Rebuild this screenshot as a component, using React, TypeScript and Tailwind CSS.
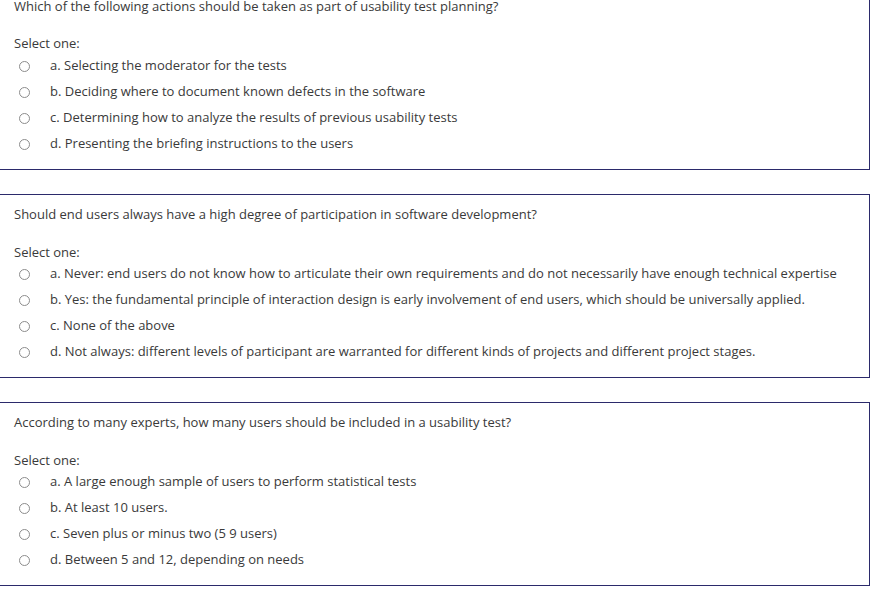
import React from 'react';

type Question = {
    text: string;
    options: string[];
};

const questions: Question[] = [
    {
        text: 'Which of the following actions should be taken as part of usability test planning?',
        options: [
            'a. Selecting the moderator for the tests',
            'b. Deciding where to document known defects in the software',
            'c. Determining how to analyze the results of previous usability tests',
            'd. Presenting the briefing instructions to the users',
        ],
    },
    {
        text: 'Should end users always have a high degree of participation in software development?',
        options: [
            'a. Never: end users do not know how to articulate their own requirements and do not necessarily have enough technical expertise',
            'b. Yes: the fundamental principle of interaction design is early involvement of end users, which should be universally applied.',
            'c. None of the above',
            'd. Not always: different levels of participant are warranted for different kinds of projects and different project stages.',
        ],
    },
    {
        text: 'According to many experts, how many users should be included in a usability test?',
        options: [
            'a. A large enough sample of users to perform statistical tests',
            'b. At least 10 users.',
            'c. Seven plus or minus two (5 9 users)',
            'd. Between 5 and 12, depending on needs',
        ],
    },
];

function QuestionCard({q, first}: {q: Question; first: boolean}) {
    // the first card is cut off at the top of the screenshot
    return (
        <div
            className={
                first
                    ? 'w-[870px] border-r border-b border-[#2b2a6b] bg-white pb-[12px] pl-[14px]'
                    : 'w-[870px] mt-[24px] border border-l-0 border-[#2b2a6b] bg-white pt-[9px] pb-[12px] pl-[14px]'
            }
        >
            <div className={first ? 'leading-[12px]' : 'leading-[20px]'}>{q.text}</div>
            <div className={first ? 'mt-[22px] leading-[19px]' : 'mt-[19px] leading-[18px]'}>Select one:</div>
            <div className="flex flex-col">
                {q.options.map((opt) => (
                    <label key={opt} className="flex items-center h-[26px]">
                        <span className="ml-[5px] w-[11px] h-[11px] rounded-full border border-[#8c8c8c] bg-white shrink-0" />
                        <span className="ml-[20px] whitespace-nowrap">{opt}</span>
                    </label>
                ))}
            </div>
        </div>
    );
}

export default function App() {
    return (
        <div
            className="min-h-screen w-[876px] h-[599px] overflow-hidden bg-white text-[13px] text-[#3a3a3a]"
            style={{fontFamily: '"Open Sans", "Noto Sans", sans-serif'}}
        >
            {questions.map((q, i) => (
                <QuestionCard key={i} q={q} first={i === 0} />
            ))}
        </div>
    );
}
